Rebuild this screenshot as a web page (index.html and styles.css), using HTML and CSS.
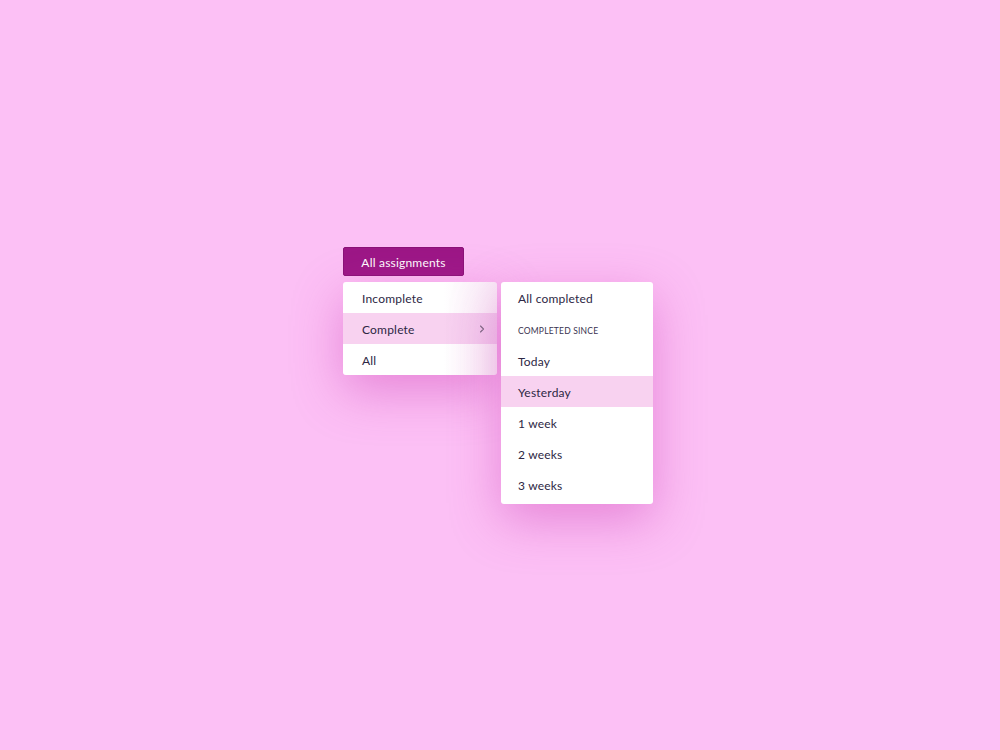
FILE: index.html
```html
<!doctype html>
<html>

<head>
  <meta charset='utf-8'>
  <title>Assignments filter</title>
  <link rel="stylesheet" href="styles.css">
</head>

<body>
  <div class='filter'>
    <button class='trigger'>All assignments</button>
    <div class='menus'>
      <ul class='menu menu-main'>
        <li class='item'>Incomplete</li>
        <li class='item active'>Complete
          <svg class='chev' width='8' height='10' viewBox='0 0 8 10'>
            <path d='M2.5 2 L5.5 5 L2.5 8' fill='none' stroke='#7a6a80' stroke-width='1.1' stroke-linecap='round' stroke-linejoin='round' />
          </svg>
        </li>
        <li class='item'>All</li>
      </ul>
      <ul class='menu menu-sub'>
        <li class='item'>All completed</li>
        <li class='label'>COMPLETED SINCE</li>
        <li class='item'>Today</li>
        <li class='item active'>Yesterday</li>
        <li class='item'>1 week</li>
        <li class='item'>2 weeks</li>
        <li class='item'>3 weeks</li>
      </ul>
    </div>
  </div>
</body>

</html>
```

FILE: styles.css
```css
* {
  margin: 0;
  padding: 0;
  box-sizing: border-box;
}
body {
  background: #fcc0f5;
  font-family: Lato, "Open Sans", sans-serif;
  color: #2d2744;
  height: 750px;
  overflow: hidden;
}
.filter {
  display: flex;
  flex-direction: column;
  align-items: flex-start;
  gap: 6px;
  padding: 247px 0 0 343px;
}
.trigger {
  width: 121px;
  height: 29px;
  padding-top: 2px;
  border: 1px solid #8a1277;
  border-radius: 2px;
  background: #9c1786;
  color: #fff;
  font-family: inherit;
  font-size: 12px;
  letter-spacing: 0.2px;
}
.menus {
  display: flex;
  align-items: flex-start;
  gap: 4px;
}
.menu {
  list-style: none;
  background: #fff;
  border-radius: 3px;
  overflow: hidden;
  box-shadow: 0 16px 50px rgba(200, 50, 175, 0.42);
}
.menu-main {
  width: 154px;
  position: relative;
  background: linear-gradient(90deg, #fff 65%, #f9eaf7 100%);
}
.menu-sub {
  width: 152px;
  padding-bottom: 4px;
  z-index: 1;
}
.item {
  height: 31px;
  padding-top: 1px;
  display: flex;
  align-items: center;
  justify-content: space-between;
  font-size: 12px;
  letter-spacing: 0.2px;
}
.menu-main .item {
  padding-left: 19px;
  padding-right: 11px;
}
.menu-sub .item {
  padding-left: 17px;
  padding-right: 17px;
}
.item.active {
  background: #f8d2f0;
}
.menu-main .item.active {
  background: linear-gradient(90deg, #f8d2f0 65%, #f1c8ec 100%);
}
.label {
  height: 32px;
  padding: 3px 17px 0;
  display: flex;
  align-items: center;
  font-size: 8.5px;
  letter-spacing: 0.2px;
  color: #3a3350;
}
.chev {
  display: block;
}
```
